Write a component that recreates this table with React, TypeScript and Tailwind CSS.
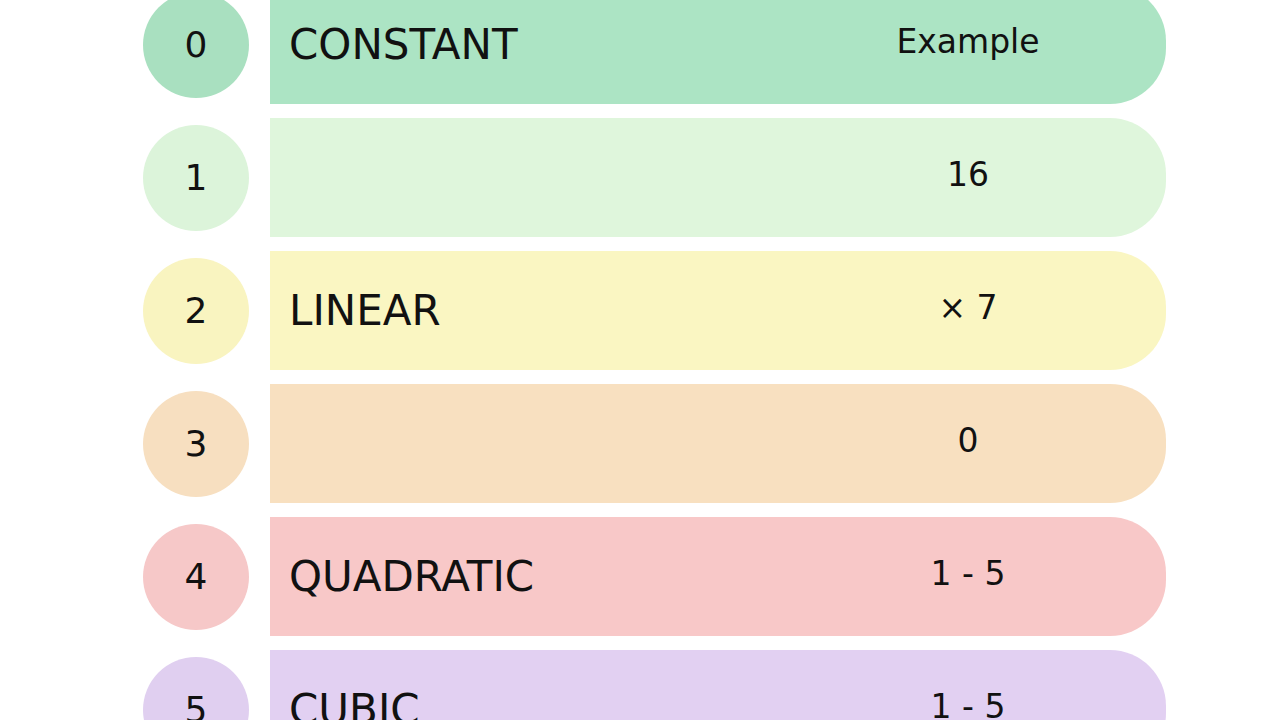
const rows = [
  { n: '0', label: 'CONSTANT', value: 'Example', circle: 'bg-[#a9e0c0]', bar: 'bg-[#ace4c4]' },
  { n: '1', label: '', value: '16', circle: 'bg-[#dcf4da]', bar: 'bg-[#dff6dc]' },
  { n: '2', label: 'LINEAR', value: '× 7', circle: 'bg-[#f9f4c0]', bar: 'bg-[#faf6c2]' },
  { n: '3', label: '', value: '0', circle: 'bg-[#f7dfc0]', bar: 'bg-[#f8e0c0]' },
  { n: '4', label: 'QUADRATIC', value: '1 - 5', circle: 'bg-[#f6c8c8]', bar: 'bg-[#f8c8c8]' },
  { n: '5', label: 'CUBIC', value: '1 - 5', circle: 'bg-[#e0cff0]', bar: 'bg-[#e2d0f2]' },
];

const App = () => {
  return (
    <div className="w-[1280px] h-[720px] overflow-hidden bg-white font-['DejaVu_Sans',sans-serif] text-[#111]">
      <div className="-mt-[15px] flex flex-col gap-[14px] pl-[143px]">
        {rows.map((row) => (
          <div key={row.n} className="flex items-center gap-[21px]">
            <div
              className={`w-[106px] h-[106px] shrink-0 rounded-full flex items-center justify-center text-[36px] ${row.circle}`}
            >
              {row.n}
            </div>
            <div className={`w-[896px] h-[119px] shrink-0 rounded-r-[56px] flex items-center ${row.bar}`}>
              <div className="flex-1 pl-[19px] text-[42px] leading-none">{row.label}</div>
              <div className="w-[396px] text-center text-[33px] leading-none -mt-[6px]">{row.value}</div>
            </div>
          </div>
        ))}
      </div>
    </div>
  );
};

export default App;
